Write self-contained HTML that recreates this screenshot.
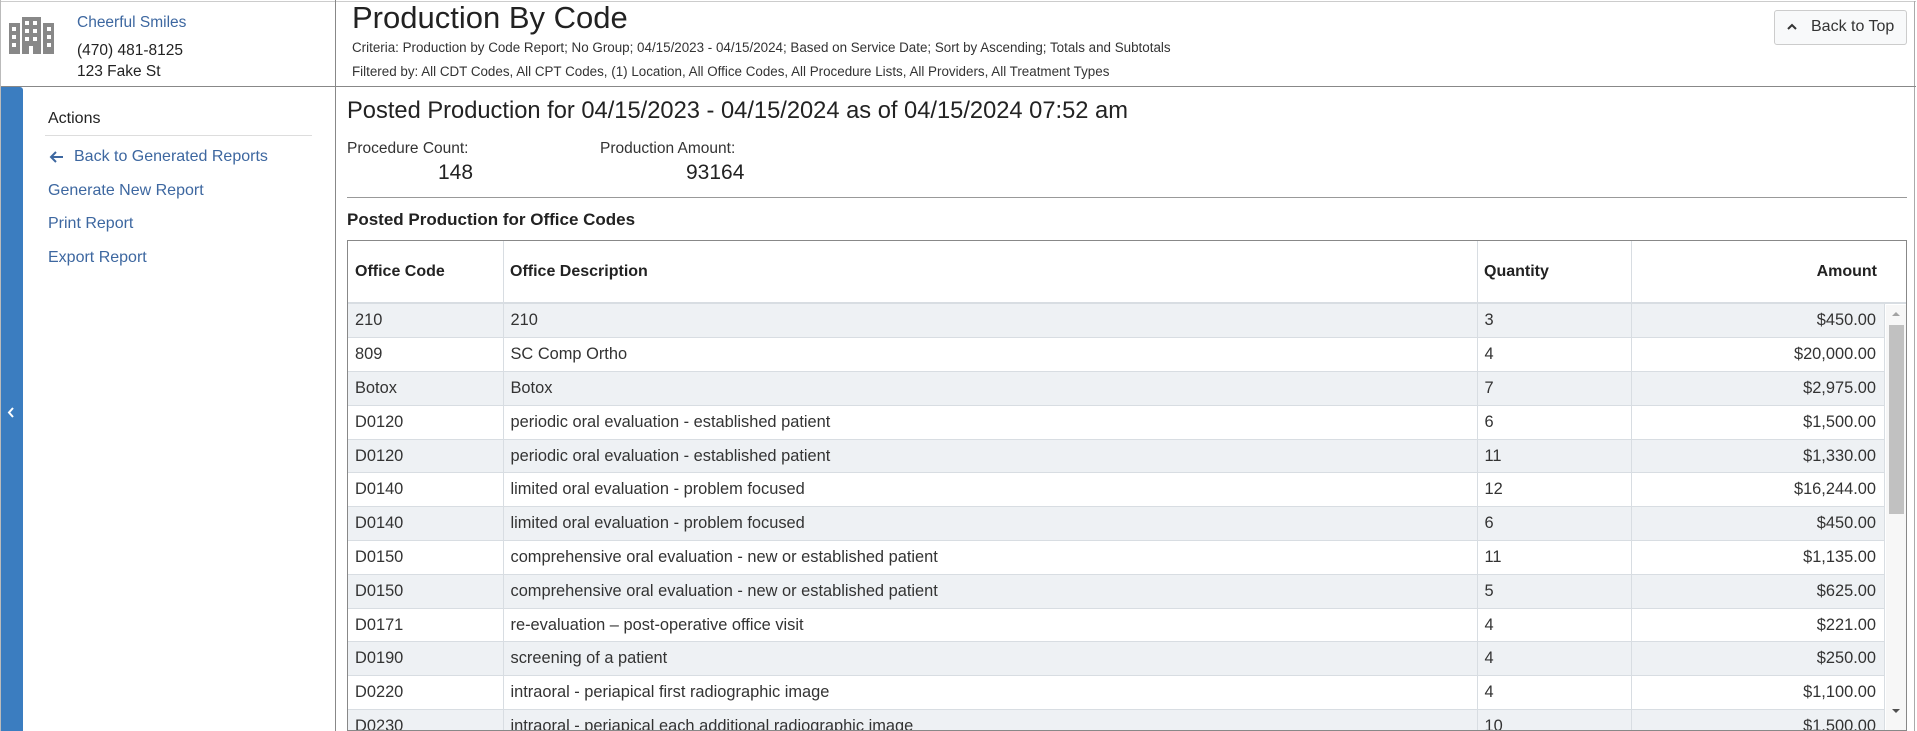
<!DOCTYPE html>
<html><head><meta charset="utf-8"><style>
*{box-sizing:border-box;margin:0;padding:0}
body{width:1917px;height:731px;overflow:hidden;background:#fff;font-family:"Liberation Sans",sans-serif;color:#333;position:relative}
.a{position:absolute;white-space:nowrap}
.link{color:#3d67a0;font-size:16px}
table{border-collapse:collapse;width:100%;table-layout:fixed}
td{height:33.8px;border-bottom:1px solid #d8dde2;border-right:1px solid #d8dde2;padding:0 7px;font-size:16.4px;color:#333}
tr:nth-child(odd) td{background:#eef1f4}
td.r{text-align:right;padding-right:8px}
</style></head><body>
<div class="a" style="left:0;top:1px;width:1916px;height:1px;background:#ccc"></div>
<div class="a" style="left:1914px;top:1px;width:1px;height:730px;background:#aaa"></div>
<div class="a" style="left:0;top:86px;width:1916px;height:1px;background:#888"></div>
<div class="a" style="left:335px;top:0;width:1px;height:731px;background:#888"></div>
<div class="a" style="left:0;top:0;width:1px;height:731px;background:#bbb"></div>
<svg class="a" style="left:9px;top:17px" width="45" height="37" viewBox="0 0 45 37"><g fill="#888"><rect x="0" y="6" width="11" height="31"/><rect x="13" y="0" width="19" height="37"/><rect x="34" y="6" width="11" height="31"/></g><g fill="#fff"><rect x="3" y="10" width="4" height="4"/><rect x="3" y="18" width="4" height="4"/><rect x="3" y="26" width="4" height="4"/><rect x="16" y="4" width="4" height="4"/><rect x="24" y="4" width="4" height="4"/><rect x="16" y="12" width="4" height="4"/><rect x="24" y="12" width="4" height="4"/><rect x="16" y="20" width="4" height="4"/><rect x="24" y="20" width="4" height="4"/><rect x="20" y="29" width="4" height="8"/><rect x="38" y="10" width="4" height="4"/><rect x="38" y="18" width="4" height="4"/><rect x="38" y="26" width="4" height="4"/></g></svg>
<div class="a link" style="left:77px;top:14px;font-size:15.5px">Cheerful Smiles</div>
<div class="a" style="left:77px;top:42px;font-size:15.5px;color:#222">(470) 481-8125</div>
<div class="a" style="left:77px;top:63px;font-size:15.5px;color:#222">123 Fake St</div>
<div class="a" style="left:352px;top:0px;font-size:31px;color:#222">Production By Code</div>
<div class="a" style="left:352px;top:40px;font-size:13.4px;color:#333">Criteria: Production by Code Report; No Group; 04/15/2023 - 04/15/2024; Based on Service Date; Sort by Ascending; Totals and Subtotals</div>
<div class="a" style="left:352px;top:64px;font-size:13.4px;color:#333">Filtered by: All CDT Codes, All CPT Codes, (1) Location, All Office Codes, All Procedure Lists, All Providers, All Treatment Types</div>
<div class="a" style="left:1774px;top:10px;width:133px;height:35px;border:1px solid #ccc;border-radius:3px;background:#f8f9fa;font-size:16px;color:#333;padding:7px 0 0 36px">Back to Top</div>
<svg class="a" style="left:1786px;top:22px" width="12" height="9" viewBox="0 0 12 9"><path d="M2 7 L6 3 L10 7" stroke="#333" stroke-width="2" fill="none"/></svg>
<div class="a" style="left:1px;top:87px;width:22px;height:644px;background:#3b7dc0;border-radius:0 3px 0 0"></div>
<svg class="a" style="left:6px;top:406px" width="10" height="13" viewBox="0 0 10 13"><path d="M7 2 L3 6.5 L7 11" stroke="#fff" stroke-width="2" fill="none"/></svg>
<div class="a" style="left:48px;top:110px;font-size:16px;color:#222">Actions</div>
<div class="a" style="left:45px;top:135px;width:267px;height:1px;background:#ddd"></div>
<svg class="a" style="left:49px;top:150px" width="15" height="14" viewBox="0 0 15 14"><path d="M14 7 H2 M7 2 L2 7 L7 12" stroke="#3d67a0" stroke-width="2" fill="none"/></svg>
<div class="a link" style="left:74px;top:148px">Back to Generated Reports</div>
<div class="a link" style="left:48px;top:182px">Generate New Report</div>
<div class="a link" style="left:48px;top:215px">Print Report</div>
<div class="a link" style="left:48px;top:249px">Export Report</div>
<div class="a" style="left:347px;top:98px;font-size:23.7px;color:#222">Posted Production for 04/15/2023 - 04/15/2024 as of 04/15/2024 07:52 am</div>
<div class="a" style="left:347px;top:140px;font-size:15.5px">Procedure Count:</div>
<div class="a" style="left:438px;top:161px;font-size:21px;color:#222">148</div>
<div class="a" style="left:600px;top:140px;font-size:15.5px">Production Amount:</div>
<div class="a" style="left:686px;top:161px;font-size:21px;color:#222">93164</div>
<div class="a" style="left:347px;top:197px;width:1560px;height:1px;background:#999"></div>
<div class="a" style="left:347px;top:210px;font-size:17px;font-weight:bold;color:#222">Posted Production for Office Codes</div>
<div class="a" style="left:347px;top:240px;width:1560px;height:491px;border:1px solid #888;overflow:hidden">
<div style="height:63px;border-bottom:2px solid #d8dde2;position:relative;font-size:16px;font-weight:bold;color:#222">
<div class="a" style="left:7px;top:22px">Office Code</div>
<div class="a" style="left:162px;top:22px">Office Description</div>
<div class="a" style="left:1136px;top:22px">Quantity</div>
<div class="a" style="right:29px;top:22px">Amount</div>
<div class="a" style="left:155px;top:0;width:1px;height:63px;background:#d8dde2"></div>
<div class="a" style="left:1129px;top:0;width:1px;height:63px;background:#d8dde2"></div>
<div class="a" style="left:1283px;top:0;width:1px;height:63px;background:#d8dde2"></div>
</div>
<div style="width:1537px">
<table><colgroup><col style="width:155px"><col style="width:974px"><col style="width:154px"><col></colgroup>
<tr><td>210</td><td>210</td><td>3</td><td class="r">$450.00</td></tr>
<tr><td>809</td><td>SC Comp Ortho</td><td>4</td><td class="r">$20,000.00</td></tr>
<tr><td>Botox</td><td>Botox</td><td>7</td><td class="r">$2,975.00</td></tr>
<tr><td>D0120</td><td>periodic oral evaluation - established patient</td><td>6</td><td class="r">$1,500.00</td></tr>
<tr><td>D0120</td><td>periodic oral evaluation - established patient</td><td>11</td><td class="r">$1,330.00</td></tr>
<tr><td>D0140</td><td>limited oral evaluation - problem focused</td><td>12</td><td class="r">$16,244.00</td></tr>
<tr><td>D0140</td><td>limited oral evaluation - problem focused</td><td>6</td><td class="r">$450.00</td></tr>
<tr><td>D0150</td><td>comprehensive oral evaluation - new or established patient</td><td>11</td><td class="r">$1,135.00</td></tr>
<tr><td>D0150</td><td>comprehensive oral evaluation - new or established patient</td><td>5</td><td class="r">$625.00</td></tr>
<tr><td>D0171</td><td>re-evaluation – post-operative office visit</td><td>4</td><td class="r">$221.00</td></tr>
<tr><td>D0190</td><td>screening of a patient</td><td>4</td><td class="r">$250.00</td></tr>
<tr><td>D0220</td><td>intraoral - periapical first radiographic image</td><td>4</td><td class="r">$1,100.00</td></tr>
<tr><td>D0230</td><td>intraoral - periapical each additional radiographic image</td><td>10</td><td class="r">$1,500.00</td></tr>
</table></div>
<div class="a" style="left:1538px;top:64px;width:20px;height:430px;background:#f7f7f7"></div>
<div class="a" style="left:1541px;top:84px;width:15px;height:189px;background:#c1c1c1"></div>
<svg class="a" style="left:1543px;top:70px" width="10" height="6"><path d="M1 5 L5 1 L9 5Z" fill="#a3a3a3"/></svg>
<svg class="a" style="left:1543px;top:467px" width="10" height="6"><path d="M1 1 L5 5 L9 1Z" fill="#505050"/></svg>
</div>
</body></html>
